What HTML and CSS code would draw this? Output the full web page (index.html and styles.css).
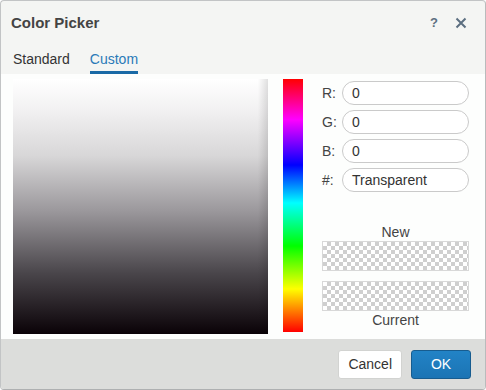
FILE: index.html
```html
<!DOCTYPE html>
<html lang="en">
<head>
  <meta charset="UTF-8">
  <meta name="viewport" content="width=device-width, initial-scale=1.0">
  <title>Color Picker</title>
  <link rel="stylesheet" href="styles.css">
</head>
<body>

  <div class="dialog">
    <!-- Title bar -->
    <div class="dialog-head">
      <span class="dialog-title">Color Picker</span>
      <div class="head-tools">
        <span class="help">?</span>
        <svg class="close" width="12" height="12" viewBox="0 0 12 12">
          <path d="M1.5 1.5 L10.5 10.5 M10.5 1.5 L1.5 10.5" stroke="#5c6f80" stroke-width="2" fill="none"/>
        </svg>
      </div>
    </div>

    <!-- Tabs -->
    <div class="tabs">
      <span class="tab">Standard</span>
      <span class="tab active">Custom</span>
    </div>

    <!-- Picker body -->
    <div class="picker">
      <div class="sv-square"></div>
      <div class="hue-bar"></div>
      <div class="values">
        <div class="field"><label>R:</label><div class="input">0</div></div>
        <div class="field"><label>G:</label><div class="input">0</div></div>
        <div class="field"><label>B:</label><div class="input">0</div></div>
        <div class="field"><label>#:</label><div class="input">Transparent</div></div>

        <div class="preview">
          <div class="preview-label">New</div>
          <div class="swatch"></div>
          <div class="swatch swatch-current"></div>
          <div class="preview-label">Current</div>
        </div>
      </div>
    </div>

    <!-- Buttons -->
    <div class="dialog-foot">
      <button class="btn">Cancel</button>
      <button class="btn btn-primary">OK</button>
    </div>
  </div>

</body>
</html>
```

FILE: styles.css
```css
body {
  margin: 0;
  padding: 0;
  font-family: "Liberation Sans", Arial, sans-serif;
  font-size: 14px;
  color: #333;
  background: #fff;
}

.dialog {
  width: 486px;
  height: 390px;
  box-sizing: border-box;
  border: 1px solid #c2c4c5;
  border-right-color: #b9bbbc;
  border-bottom-color: #aeb0b1;
  border-radius: 4px;
  overflow: hidden;
  display: flex;
  flex-direction: column;
  background: #f4f5f3;
}

.dialog-head {
  height: 43px;
  display: flex;
  align-items: center;
  justify-content: space-between;
  padding: 0 18px 0 10px;
}

.dialog-title {
  font-size: 15px;
  font-weight: bold;
  color: #444;
}

.head-tools {
  display: flex;
  align-items: center;
  gap: 17px;
}

.help {
  font-size: 13px;
  font-weight: bold;
  color: #5c6f80;
}

.close {
  display: block;
}

.tabs {
  height: 30px;
  display: flex;
  gap: 20px;
  padding: 0 12px;
}

.tab {
  padding-top: 7px;
  padding-bottom: 2px;
  line-height: 17px;
  border-bottom: 3px solid transparent;
  color: #333;
}

.tab.active {
  color: #2a7ab8;
  border-bottom-color: #1a6aa6;
}

.picker {
  flex: 1;
  background: #fdfefd;
  display: flex;
  padding: 5px 0 0 12px;
}

.sv-square {
  width: 255px;
  height: 255px;
  background:
    linear-gradient(to right, rgba(0,0,0,0) 96%, rgba(0,0,0,0.12) 100%),
    linear-gradient(#ffffff 0%, #f2f1f2 12%, #d8d7d8 30%, #9a979b 52%, #4a464b 76%, #0a0207 100%);
}

.hue-bar {
  width: 20px;
  height: 253px;
  margin-left: 15px;
  background: linear-gradient(#ff0000 0%, #ff00ff 16%, #0000ff 34%, #00ffff 49%, #00ff00 66%, #ffff00 83%, #ff0000 100%);
}

.values {
  width: 147px;
  margin-left: 19px;
  padding-top: 2px;
  display: flex;
  flex-direction: column;
  gap: 5px;
}

.field {
  display: flex;
  align-items: center;
}

.field label {
  width: 20px;
  color: #444;
}

.input {
  flex: 1;
  height: 24px;
  box-sizing: border-box;
  border: 1px solid #cacaca;
  border-radius: 12px;
  padding: 0 9px;
  line-height: 22px;
  color: #333;
  background: #fff;
}

.preview {
  margin-top: 27px;
  display: flex;
  flex-direction: column;
  align-items: stretch;
}

.preview-label {
  text-align: center;
  line-height: 16px;
  color: #444;
}

.swatch {
  height: 30px;
  box-sizing: border-box;
  border: 1px solid #d8d8d8;
  margin-top: 1px;
  background-color: #fff;
  background-image:
    linear-gradient(45deg, #cfcfcf 25%, transparent 25%, transparent 75%, #cfcfcf 75%),
    linear-gradient(45deg, #cfcfcf 25%, transparent 25%, transparent 75%, #cfcfcf 75%);
  background-size: 8px 8px;
  background-position: 0 0, 4px 4px;
}

.swatch-current {
  margin-top: 10px;
  margin-bottom: 1px;
}

.dialog-foot {
  height: 50px;
  background: #dcdddb;
  display: flex;
  justify-content: flex-end;
  align-items: center;
  gap: 9px;
  padding-right: 14px;
}

.btn {
  height: 29px;
  min-width: 62px;
  padding: 0 9px;
  font-family: "Liberation Sans", Arial, sans-serif;
  font-size: 14px;
  color: #333;
  background: #fff;
  border: 1px solid #d2d3d1;
  border-radius: 3px;
}

.btn-primary {
  min-width: 60px;
  color: #fff;
  background: linear-gradient(#2283c6, #1b74b4);
  border-color: #175c8f;
}
```
